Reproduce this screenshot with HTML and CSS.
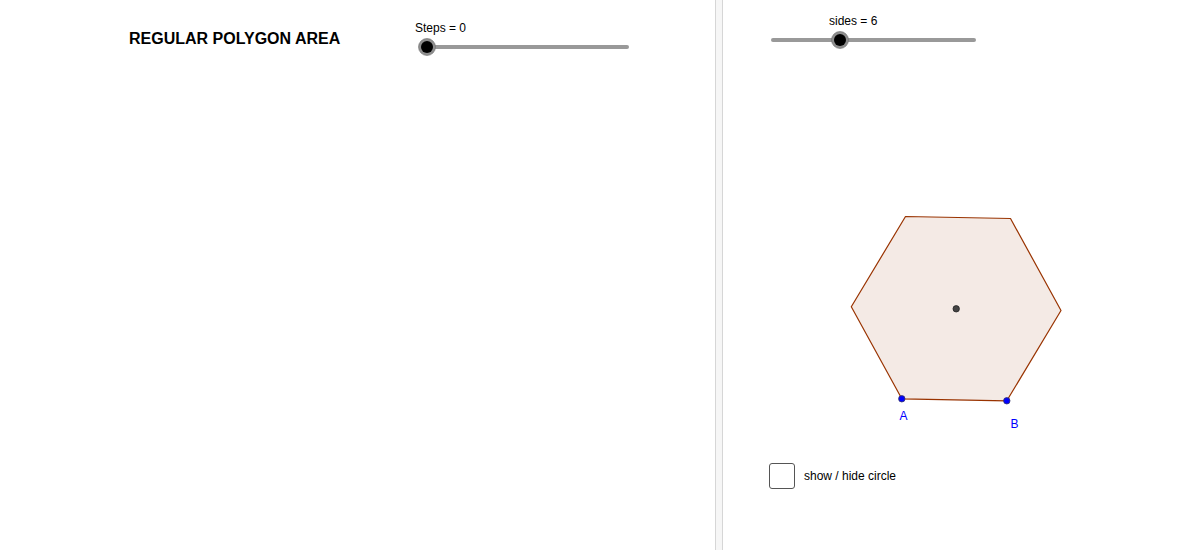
FILE: index.html
```html
<!DOCTYPE html>
<html>
<head>
<meta charset="utf-8">
<link rel="stylesheet" href="styles.css">
</head>
<body>
<div class="app">
  <section class="panel left">
    <h1 class="title">REGULAR POLYGON AREA</h1>
    <div class="slider slider-steps">
      <div class="slider-label">Steps = 0</div>
      <svg class="slider-svg" width="220" height="20" viewBox="0 0 220 20">
        <line class="track" x1="13" y1="10" x2="212" y2="10"/>
        <circle class="knob-ring" cx="12" cy="10" r="8.5"/>
        <circle class="knob" cx="12" cy="10" r="6"/>
      </svg>
    </div>
  </section>
  <div class="divider"></div>
  <section class="panel right">
    <div class="slider slider-sides">
      <div class="slider-label">sides = 6</div>
      <svg class="slider-svg" width="220" height="20" viewBox="0 0 220 20">
        <line class="track" x1="12" y1="10" x2="213" y2="10"/>
        <circle class="knob-ring" cx="79" cy="10" r="8.5"/>
        <circle class="knob" cx="79" cy="10" r="6"/>
      </svg>
    </div>
    <svg class="canvas" width="477" height="550" viewBox="723 0 477 550">
      <polygon class="hex" points="905.5,216.5 1010.5,218.5 1061,310.5 1006.8,400.8 901.8,398.8 851.3,306.8"/>
      <circle class="center-pt" cx="956.2" cy="308.8" r="3.2"/>
      <circle class="pt" cx="901.8" cy="398.8" r="3.2"/>
      <circle class="pt" cx="1006.8" cy="400.8" r="3.2"/>
      <text class="pt-label" x="899.5" y="420">A</text>
      <text class="pt-label" x="1010.5" y="428">B</text>
    </svg>
    <label class="check">
      <span class="box"></span>
      <span class="check-text">show / hide circle</span>
    </label>
  </section>
</div>
</body>
</html>
```
FILE: styles.css
```css
html, body {
  margin: 0;
  padding: 0;
  background: #ffffff;
  font-family: "Liberation Sans", Arial, sans-serif;
}
.app {
  display: flex;
  width: 1200px;
  height: 550px;
  overflow: hidden;
}
.panel {
  position: relative;
  height: 550px;
}
.left {
  width: 715px;
  flex: none;
}
.divider {
  width: 6px;
  flex: none;
  background: #f6f6f6;
  border-left: 1px solid #d6d6d6;
  border-right: 1px solid #d6d6d6;
}
.right {
  flex: 1;
}
.title {
  position: absolute;
  left: 129px;
  top: 30px;
  margin: 0;
  font-size: 16px;
  line-height: 18px;
  font-weight: bold;
  color: #000;
}
.slider {
  position: absolute;
}
.slider-label {
  font-size: 12px;
  line-height: 14px;
  color: #000;
}
.slider-svg {
  display: block;
}
.slider-steps {
  left: 415px;
  top: 21px;
}
.slider-steps .slider-svg {
  margin-top: 2px;
}
.slider-sides {
  left: 38px;
  top: 14px;
}
.slider-sides .slider-label {
  padding-left: 68px;
}
.slider-sides .slider-svg {
  margin-top: 2px;
}
.track {
  stroke: #999999;
  stroke-width: 4;
  stroke-linecap: round;
}
.knob-ring {
  fill: #8e8e8e;
  stroke: #6e6e6e;
  stroke-width: 0.6;
}
.knob {
  fill: #000;
}
.canvas {
  position: absolute;
  left: 0;
  top: 0;
}
.hex {
  fill: #f4eae5;
  stroke: #993300;
  stroke-width: 1.2;
  stroke-linejoin: round;
}
.center-pt {
  fill: #444;
  stroke: #222;
  stroke-width: 0.8;
}
.pt {
  fill: #0000ff;
  stroke: #333366;
  stroke-width: 0.8;
}
.pt-label {
  font-family: "Liberation Sans", Arial, sans-serif;
  font-size: 12px;
  fill: #0000ff;
}
.check {
  position: absolute;
  left: 46px;
  top: 463px;
  display: flex;
  align-items: center;
  gap: 9px;
}
.box {
  width: 24px;
  height: 24px;
  border: 1px solid #555;
  border-radius: 3px;
  background: #fff;
}
.check-text {
  font-size: 12px;
  color: #000;
}
```
